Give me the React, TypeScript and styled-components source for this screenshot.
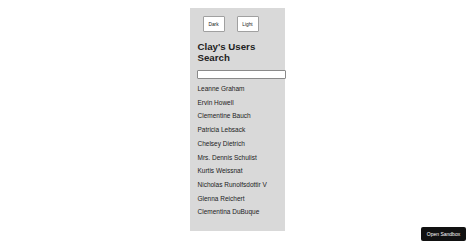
import React, { useState } from 'react'
import styled, { createGlobalStyle } from 'styled-components'

const users = [
  'Leanne Graham',
  'Ervin Howell',
  'Clementine Bauch',
  'Patricia Lebsack',
  'Chelsey Dietrich',
  'Mrs. Dennis Schulist',
  'Kurtis Weissnat',
  'Nicholas Runolfsdottir V',
  'Glenna Reichert',
  'Clementina DuBuque',
]

const GlobalStyle = createGlobalStyle`
  html, body {
    margin: 0;
    padding: 0;
    background: #fff;
    font-family: "Liberation Sans", Arial, sans-serif;
  }
`

const Page = styled.div`
  width: 474px;
  height: 248px;
  padding-top: 8px;
  box-sizing: border-box;
`

const Panel = styled.div<{ dark: boolean }>`
  width: 95px;
  margin: 0 auto;
  padding: 8px 0 12px 8px;
  box-sizing: border-box;
  background: ${(p) => (p.dark ? '#444' : '#d9d9d9')};
  color: ${(p) => (p.dark ? '#eee' : '#222')};
  display: flex;
  flex-direction: column;
`

const Toolbar = styled.div`
  display: flex;
  gap: 12px;
  padding-left: 5px;
`

const ThemeButton = styled.button`
  width: 22px;
  height: 16px;
  padding: 0;
  background: #fff;
  border: 1px solid #a0a0a0;
  border-radius: 1px;
  font-family: "Liberation Sans", Arial, sans-serif;
  font-size: 4.8px;
  color: #222;
`

const Title = styled.h2`
  margin: 9px 0 0;
  font-size: 9.7px;
  line-height: 11px;
  font-weight: bold;
`

const SearchInput = styled.input`
  margin: 7px 0 0 -1px;
  width: 89px;
  height: 9px;
  padding: 0;
  box-sizing: border-box;
  border: 1px solid #8a8a8a;
  border-radius: 1px;
  background: #fff;
`

const List = styled.div`
  margin-top: 3px;
  display: flex;
  flex-direction: column;
`

const Item = styled.div`
  font-size: 6.5px;
  line-height: 13.7px;
  white-space: nowrap;
`

const SandboxButton = styled.a`
  position: fixed;
  right: 8px;
  bottom: 7px;
  width: 45px;
  height: 14px;
  display: flex;
  align-items: center;
  justify-content: center;
  background: #111;
  color: #fff;
  border-radius: 2px;
  font-size: 5px;
  text-decoration: none;
`

export default function App() {
  const [dark, setDark] = useState(false)
  const [query, setQuery] = useState('')
  const shown = users.filter((u) => u.toLowerCase().includes(query.toLowerCase()))

  return (
    <Page>
      <GlobalStyle />
      <Panel dark={dark}>
        <Toolbar>
          <ThemeButton onClick={() => setDark(true)}>Dark</ThemeButton>
          <ThemeButton onClick={() => setDark(false)}>Light</ThemeButton>
        </Toolbar>
        <Title>
          Clay's Users
          <br />
          Search
        </Title>
        <SearchInput value={query} onChange={(e) => setQuery(e.target.value)} />
        <List>
          {shown.map((u) => (
            <Item key={u}>{u}</Item>
          ))}
        </List>
      </Panel>
      <SandboxButton>Open Sandbox</SandboxButton>
    </Page>
  )
}
